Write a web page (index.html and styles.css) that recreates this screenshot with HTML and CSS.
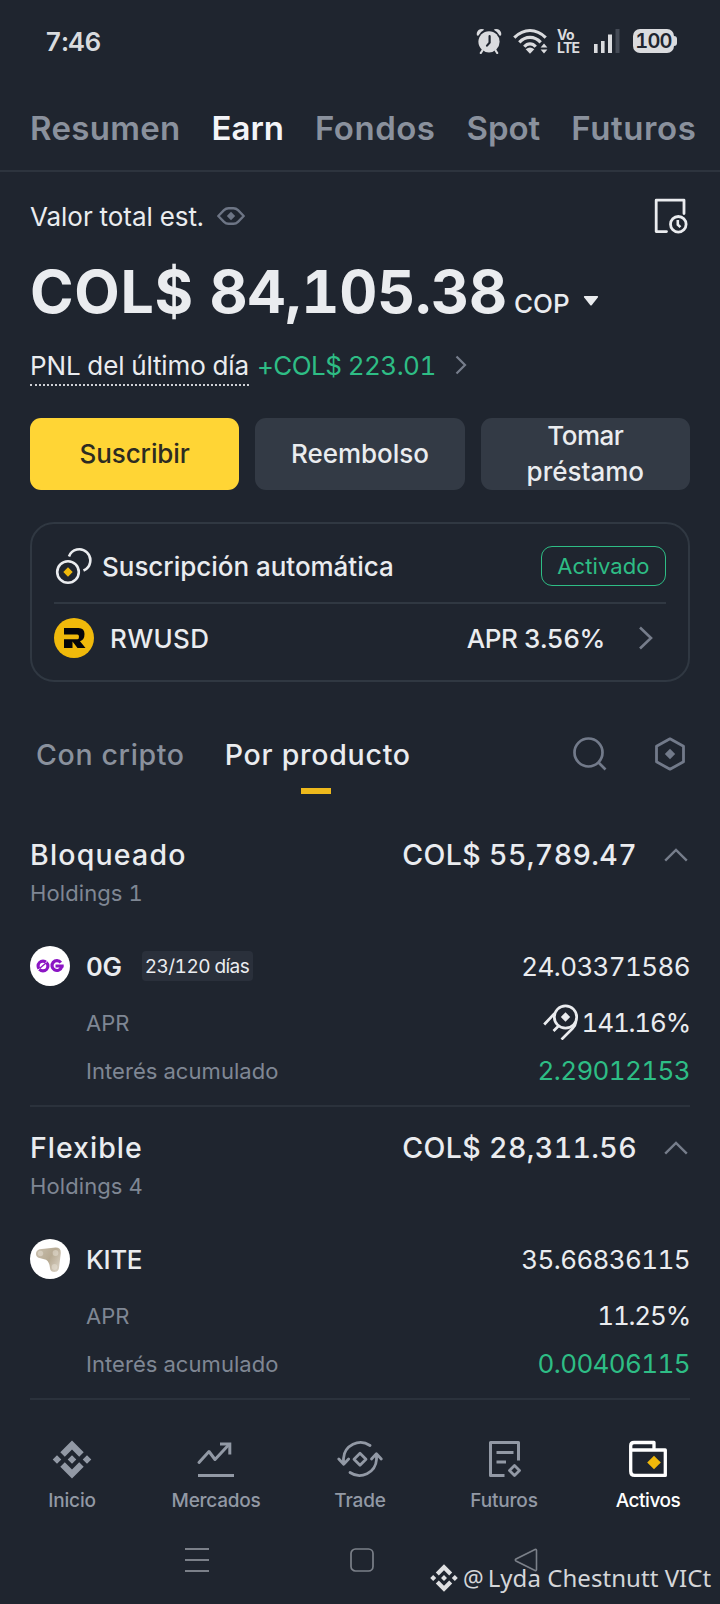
FILE: index.html
```html
<!DOCTYPE html>
<html lang="es">
<head>
<meta charset="utf-8">
<title>Earn</title>
<link rel="stylesheet" href="styles.css">
</head>
<body>
<div class="screen">
  <header class="status">
    <span class="time">7:46</span>
    <div class="status-icons">
      <svg class="alarm" width="26" height="26" viewBox="0 0 26 26"><g fill="#dadbde"><circle cx="13" cy="13.8" r="10.6"/><path d="M1 7.6Q-.2 3.2 4 1.2Q7 .4 8.2 1.8Q4 4 2.3 7.8z"/><path d="M25 7.6Q26.2 3.2 22 1.2Q19 .4 17.8 1.8Q22 4 23.7 7.8z"/></g><path d="M6.4 22.5L4.8 25M19.6 22.5L21.2 25" stroke="#dadbde" stroke-width="2.2" stroke-linecap="round"/><path d="M13.6 8.2v6.4L11 17.6" fill="none" stroke="#1f252f" stroke-width="2.2" stroke-linecap="round"/></svg>
      <svg class="wifi" width="36" height="26" viewBox="0 0 36 26"><g fill="none" stroke="#dadbde" stroke-width="3.2"><path d="M1.3 9.6Q8.5 2.5 17 2.5T32.7 9.6"/><path d="M6.3 14.3Q11 9.3 17 9.3T27.7 14.3"/><path d="M11.3 18.7Q13.8 15.8 17 15.8T22.7 18.7"/></g><path d="M12.7 21.3Q17 17.8 21.3 21.3L17 25.8z" fill="#dadbde"/><path d="M31 15.5l3.4 4.1h-6.8zM31 25.5l3.4-4.1h-6.8z" fill="#dadbde"/></svg>
      <span class="volte"><span>Vo</span><span>LTE</span></span>
      <svg class="signal" width="26" height="26" viewBox="0 0 26 26"><path d="M0 16h3.6v9H0zM7 13h3.6v12H7zM14 6.500h4V25h-4z" fill="#dadbde"/><path d="M21.500 1h4v24h-4z" fill="#444a55"/></svg>
      <span class="battery"><span class="battery-body">100</span><i></i></span>
    </div>
  </header>

  <nav class="tabs">
    <span class="t-resumen">Resumen</span><span class="t-earn on">Earn</span><span class="t-fondos">Fondos</span><span class="t-spot">Spot</span><span class="t-futuros">Futuros</span>
  </nav>

  <main>
    <div class="value-row">
      <span class="value-label">Valor total est.</span>
      <svg class="eye" width="28" height="18" viewBox="0 0 28 18" fill="none"><path d="M1.300 9L7 3.200Q9 1.200 11.500 1.200h5Q19 1.200 21 3.200L26.700 9L21 14.800Q19 16.800 16.500 16.800h-5Q9 16.800 7 14.800z" stroke="#6d7585" stroke-width="2.400" stroke-linejoin="round"/><path d="M14 4.800l4.200 4.200-4.200 4.200-4.200-4.200z" fill="#6d7585"/></svg>
      <svg class="history" width="34" height="36" viewBox="0 0 34 36" fill="none" stroke="#eaecef" stroke-width="2.800"><path d="M12.500 33.600H2.200V2.200H30v13.300" stroke-linecap="round" stroke-linejoin="round"/><circle cx="24.300" cy="26.300" r="7.800"/><path d="M23.800 22v4.600l2.600 2.600" stroke-width="2.600"/></svg>
    </div>
    <div class="balance">
      <span class="amount"><span class="cur">COL$</span> 84,105.38</span><span class="currency">COP</span>
      <svg width="16" height="10" viewBox="0 0 16 10"><path d="M1.500 0h13Q15.600.4 14.800 1.500L8.900 9Q8 10 7.100 9L1.200 1.500Q.4.4 1.500 0z" fill="#eaecef"/></svg>
    </div>
    <div class="pnl">
      <span class="pnl-label">PNL del último día</span><span class="pnl-value">+COL$ 223.01</span>
      <svg width="12" height="20" viewBox="0 0 12 20"><path d="M1.500 1.500L10 10 1.500 18.500" fill="none" stroke="#767d8b" stroke-width="2.200"/></svg>
    </div>

    <div class="actions">
      <button class="primary">Suscribir</button>
      <button class="b-reembolso">Reembolso</button>
      <button class="b-prestamo"><span class="l1">Tomar</span><span>préstamo</span></button>
    </div>

    <section class="card">
      <div class="card-top">
        <svg width="38" height="38" viewBox="0 0 38 38" fill="none"><circle cx="13" cy="25" r="10.800" stroke="#eaecef" stroke-width="2.600"/><path d="M14 9.500A11 11 0 1 1 28.500 23.500" stroke="#eaecef" stroke-width="2.600"/><path d="M13 20.300l4.700 4.700-4.700 4.700L8.300 25z" fill="#f0b90b"/></svg>
        <span class="card-title">Suscripción automática</span>
        <span class="badge">Activado</span>
      </div>
      <div class="card-bottom">
        <svg class="rw" width="40" height="40" viewBox="0 0 40 40"><circle cx="20" cy="20" r="20" fill="#f0b90b"/><path d="M10 10h14.500Q30.500 10 30.500 16t-4.500 7.200L31.500 30H23.500L18.500 23.500V30H10V21.300H23.500Q25 21.300 25 18.800T23 16.500H10z" fill="#05060a"/></svg>
        <span class="rw-name">RWUSD</span>
        <span class="rw-apr">APR 3.56%</span>
        <svg class="chev" width="16" height="24" viewBox="0 0 16 24"><path d="M2 1.500L13 12 2 22.500" fill="none" stroke="#767d8b" stroke-width="2.600"/></svg>
      </div>
    </section>

    <div class="subtabs">
      <span class="st-cripto">Con cripto</span>
      <span class="st-producto">Por producto</span>
      <svg class="search" width="36" height="36" viewBox="0 0 36 36" fill="none" stroke="#727a8a" stroke-width="2.700"><circle cx="16.500" cy="16.500" r="14"/><path d="M26.500 26.500l7 7"/></svg>
      <svg class="hex" width="32" height="34" viewBox="0 0 32 34"><path d="M16 1.800L29.500 9.200V24.800L16 32.200 2.500 24.800V9.200z" fill="none" stroke="#727a8a" stroke-width="2.800" stroke-linejoin="round"/><path d="M16 11.800l5.200 5.200-5.200 5.200-5.200-5.200z" fill="#727a8a"/></svg>
    </div>

    <section class="group">
      <div class="group-head">
        <h2 class="h-bloq">Bloqueado</h2><span class="total">COL$ 55,789.47</span>
        <svg width="24" height="14" viewBox="0 0 24 14"><path d="M1.200 12.700L12 2 22.800 12.700" fill="none" stroke="#767d8b" stroke-width="2.400"/></svg>
      </div>
      <p class="holdings">Holdings 1</p>
      <div class="asset">
        <svg class="coin" width="40" height="40" viewBox="0 0 40 40"><circle cx="20" cy="20" r="20" fill="#fff"/><g fill="none" stroke="#8b15c4" stroke-width="3.200"><circle cx="13" cy="20" r="4.900"/><path d="M30.800 16.600A4.900 4.900 0 1 0 31.600 21M25.500 20h8.200"/></g><path d="M7.500 24.500L17.500 15" stroke="#fff" stroke-width="1"/><path d="M9.500 22.500L16 17" stroke="#8b15c4" stroke-width="1.400"/></svg>
        <span class="name n-0g">0G</span><span class="days">23/120 días</span>
        <span class="num n10">24.03371586</span>
      </div>
      <div class="line apr"><span class="lab">APR</span>
        <svg width="36" height="36" viewBox="0 0 36 36" fill="none" stroke="#eaecef" stroke-width="2.700"><circle cx="22.500" cy="13" r="11.200"/><path d="M1.200 20.500L11.500 9.500M10.500 27L16 21.500M33 17.500Q32.500 21.500 29.500 24.500L18.500 35.500"/><path d="M22.500 8.300l4.700 4.700-4.700 4.700-4.700-4.700z" fill="#eaecef" stroke="none"/></svg>
        <span class="num pct">141.16%</span></div>
      <div class="line interest"><span class="lab">Interés acumulado</span><span class="num n9 green">2.29012153</span></div>
    </section>

    <section class="group">
      <div class="group-head">
        <h2 class="h-flex">Flexible</h2><span class="total">COL$ 28,311.56</span>
        <svg width="24" height="14" viewBox="0 0 24 14"><path d="M1.200 12.700L12 2 22.800 12.700" fill="none" stroke="#767d8b" stroke-width="2.400"/></svg>
      </div>
      <p class="holdings">Holdings 4</p>
      <div class="asset">
        <svg class="coin" width="40" height="40" viewBox="0 0 40 40"><defs><linearGradient id="kite" x1="0" y1="0" x2="1" y2=".6"><stop offset="0" stop-color="#c9bfae"/><stop offset=".6" stop-color="#b7aa93"/><stop offset="1" stop-color="#d3cabb"/></linearGradient></defs><circle cx="20" cy="20" r="20" fill="#fff"/><path d="M9.500 10.300L25.500 8.600Q31 8.500 30.800 14L29 29Q28.300 33 24.300 33T20 29Q19.500 23 16 20.800L8.500 18.800Q5.800 17.500 6 14.500T9.500 10.300z" fill="url(#kite)"/><g fill="#e9e3d8" opacity=".5"><circle cx="10.500" cy="14.500" r="2.700"/><circle cx="25.500" cy="14" r="2.900"/><circle cx="24.500" cy="28" r="2.900"/></g></svg>
        <span class="name n-kite">KITE</span>
        <span class="num n10">35.66836115</span>
      </div>
      <div class="line apr"><span class="lab">APR</span><span class="num pct">11.25%</span></div>
      <div class="line interest"><span class="lab">Interés acumulado</span><span class="num n9 green">0.00406115</span></div>
    </section>
  </main>

  <nav class="bottom">
    <div class="item">
      <svg width="44" height="40" viewBox="0 0 44 40" fill="#9299a5"><path d="M22 .5l11.700 11.700-4.500 4.500L22 9.500l-7.200 7.200-4.500-4.500zM22 38.500L10.300 26.800l4.500-4.500L22 29.500l7.200-7.200 4.500 4.500zM22 15.200l4.300 4.300-4.300 4.300-4.300-4.300zM7 15.200l4.300 4.300L7 23.800 2.700 19.500zM37 15.200l4.300 4.300-4.300 4.300-4.300-4.300z"/></svg>
      <span class="l-inicio">Inicio</span>
    </div>
    <div class="item">
      <svg width="44" height="40" viewBox="0 0 44 40" fill="none" stroke="#9299a5" stroke-width="3"><path d="M5 22.500L15 11.500l6 8L35 4.500" stroke-linejoin="round" stroke-linecap="round"/><path d="M26 4h9.800v10.400"/><path d="M4 35.500h36"/></svg>
      <span class="l-mercados">Mercados</span>
    </div>
    <div class="item">
      <svg width="48" height="40" viewBox="0 0 48 40" fill="none" stroke="#9299a5" stroke-width="2.800" stroke-linecap="round" stroke-linejoin="round"><path d="M34 5.500A17 17 0 0 0 7.500 18.500v5.500M2.800 19l4.900 5.200 4.900-5.200"/><path d="M14 32.500A17 17 0 0 0 40.500 19.500v-5.500M35.500 19l4.900-5.200 4.900 5.200"/><path d="M24 13.200l6 6-6 6-6-6z"/></svg>
      <span class="l-trade">Trade</span>
    </div>
    <div class="item">
      <svg width="44" height="40" viewBox="0 0 44 40" fill="none" stroke="#9299a5" stroke-width="3"><path d="M22.500 35.500H8.500V2.500h28v18" stroke-linejoin="round"/><path d="M14.500 12.500h17M14.500 22h9.500"/><path d="M32.500 25.500l5 5-5 5-5-5z" stroke-width="2.800" stroke-linejoin="round"/></svg>
      <span class="l-futuros">Futuros</span>
    </div>
    <div class="item on">
      <svg width="44" height="40" viewBox="0 0 44 40" fill="none" stroke="#fff" stroke-width="3.300" stroke-linejoin="round"><path d="M28 9.500V2.500H8Q4.700 2.500 4.700 5.700V31.200Q4.700 35.400 8.700 35.400H39.300V10H5"/><path d="M28 15.700l6.800 6.800-6.800 6.800-6.800-6.800z" fill="#f0b90b" stroke="none"/></svg>
      <span class="l-activos">Activos</span>
    </div>
  </nav>

  <footer class="sys">
    <svg width="24" height="24" viewBox="0 0 24 24" stroke="#7b8089" stroke-width="1.800"><path d="M0 1h24M0 12h24M0 23h24"/></svg>
    <svg width="24" height="24" viewBox="0 0 24 24"><rect x="1" y="1" width="22" height="22" rx="4.500" fill="none" stroke="#7b8089" stroke-width="1.700"/></svg>
    <svg width="24" height="24" viewBox="0 0 24 24"><path d="M22.500 2.300v19.400Q22.300 23 21 22.500L2 13Q.6 12 2 11L21 1.500Q22.300 1 22.500 2.300z" fill="none" stroke="#7b8089" stroke-width="1.600"/></svg>
  </footer>
  <div class="watermark">
    <svg width="28" height="28" viewBox="0 0 28 28" fill="#dfe0e2"><path d="M14 .2l8.200 8.200-3 3L14 6.200l-5.200 5.200-3-3zM14 27.800L5.800 19.600l3-3L14 21.800l5.200-5.200 3 3zM14 11l3 3-3 3-3-3zM3.200 11l3 3-3 3-3-3zM24.800 11l3 3-3 3-3-3z"/></svg>
    <span class="at">@</span><span class="user">Lyda Chestnutt VICt</span>
  </div>
</div>
</body>
</html>
```
FILE: styles.css
```css
* { box-sizing: border-box; margin: 0; padding: 0; }
body { background: #1f252f; }
.screen {
  position: relative;
  width: 720px;
  height: 1604px;
  overflow: hidden;
  background: #1f252f;
  color: #eaecef;
  font-family: Inter, "Liberation Sans", sans-serif;
  font-size: 26px;
  font-variant-numeric: tabular-nums;
  white-space: nowrap;
}
svg { display: block; flex: none; }

.status { display: flex; justify-content: space-between; height: 82px; padding: 0 43px 0 45px; align-items: center; }
.time { font-size: 26px; font-weight: 600; color: #d9dbde; letter-spacing: -.4px; }
.status-icons { display: flex; align-items: center; }
.wifi { margin-left: 11px; }
.volte { display: flex; flex-direction: column; width: 24px; margin-left: 8px; font-size: 14px; line-height: 13px; font-weight: 700; color: #dadbde; letter-spacing: -.7px; }
.signal { margin-left: 13px; }
.battery { display: flex; align-items: center; margin-left: 13px; }
.battery-body { width: 41px; height: 24px; border-radius: 7px; background: #dadbde; color: #1f252f; font-size: 20px; line-height: 24px; font-weight: 600; text-align: center; letter-spacing: -.8px; }
.battery i { width: 3px; height: 10px; border-radius: 0 3px 3px 0; background: #dadbde; }

.tabs { display: flex; gap: 31px; height: 90px; padding-left: 30px; border-bottom: 2px solid #2d343e; font-size: 33px; line-height: 92px; font-weight: 600; color: #8a919d; }
.tabs .on { color: #f3f4f8; }
.t-resumen { letter-spacing: .3px; }
.t-fondos { letter-spacing: .5px; }
.t-futuros { letter-spacing: .6px; }

main { padding: 0 30px; }
.value-row { display: flex; align-items: center; height: 36px; margin-top: 26px; }
.value-label { letter-spacing: -.05px; }
.eye { margin-left: 13px; }
.history { margin-left: auto; margin-right: 2px; }
.balance { display: flex; align-items: baseline; height: 75px; margin-top: 20px; line-height: 75px; }
.amount { font-size: 59px; font-weight: 700; letter-spacing: -.15px; }
.cur { letter-spacing: .7px; }
.currency { font-weight: 500; margin-left: 7px; }
.balance svg { margin-left: 13px; transform: translateY(-7px); }
.pnl { display: flex; height: 40px; margin-top: 17px; line-height: 39px; }
.pnl-label { height: 40px; border-bottom: 2px dotted #cfd1d6; letter-spacing: -.13px; }
.pnl-value { margin-left: 8px; color: #2ebd85; letter-spacing: -.55px; }
.pnl svg { margin: 9px 0 0 19px; }

.actions { display: grid; grid-template-columns: repeat(3, 1fr); gap: 16px; margin-top: 32px; }
.actions button { display: flex; flex-direction: column; align-items: center; justify-content: center; height: 72px; border: 0; border-radius: 11px; background: #333a45; color: #eaecef; font: 500 26px/36px Inter, "Liberation Sans", sans-serif; }
.actions .primary { background: #ffd535; color: #2d2b22; letter-spacing: -.1px; }
.l1 { letter-spacing: -.5px; }

.card { height: 160px; margin-top: 32px; padding: 0 22px; border: 2px solid #303842; border-radius: 24px; }
.card-top { display: flex; align-items: center; height: 80px; padding-top: 6px; border-bottom: 2px solid #303842; font-weight: 500; }
.card-top svg { margin-left: 1px; }
.card-title { margin-left: 9px; letter-spacing: -.03px; }
.badge { margin-left: auto; width: 125px; height: 40px; border: 1.500px solid #2ebd85; border-radius: 11px; font-size: 22px; line-height: 38px; font-weight: 400; text-align: center; color: #2ebd85; letter-spacing: .1px; }
.card-bottom { display: flex; align-items: center; height: 68px; font-weight: 500; }
.rw-name { margin-left: 16px; letter-spacing: .3px; }
.rw-apr { margin-left: auto; letter-spacing: -.45px; }
.chev { margin: 0 12px 0 33px; }

.subtabs { position: relative; display: flex; height: 70px; margin-top: 42px; font-size: 28.500px; line-height: 61px; font-weight: 500; }
.st-cripto { margin-left: 6px; color: #8a919d; letter-spacing: .65px; }
.st-producto { position: relative; margin-left: 40px; letter-spacing: .75px; }
.st-producto::after { content: ""; position: absolute; left: 76px; bottom: 0; width: 30px; height: 6px; background: #eeb91c; }
.search { margin: 12px 46px 0 auto; }
.hex { margin: 13px 4px 0 0; }

.group { height: 293px; padding-top: 22px; border-bottom: 2px solid #2b323c; }
.subtabs + .group { margin-top: 20px; }
.group-head { display: flex; align-items: center; height: 37px; font-weight: 500; font-size: 28.500px; }
h2 { font: inherit; }
.h-bloq { letter-spacing: 1.200px; }
.h-flex { letter-spacing: 1px; }
.total { margin-left: auto; letter-spacing: .37px; }
.group-head svg { margin: 0 2px 0 27px; }
.holdings { margin-top: 7px; font-size: 22px; line-height: 26px; color: #7f8794; letter-spacing: .1px; }
.asset { display: flex; align-items: center; height: 40px; margin-top: 40px; }
.name { margin-left: 16px; font-weight: 500; letter-spacing: -.4px; }
.n-0g { font-weight: 600; }
.days { margin-left: 20px; width: 111px; height: 30px; border-radius: 4px; background: #2a303b; font-size: 19px; line-height: 31px; text-align: center; letter-spacing: -.55px; }
.num { margin-left: auto; letter-spacing: -.63px; }
.pct { letter-spacing: -1.200px; }
.line { display: flex; align-items: center; height: 36px; padding-left: 56px; }
.lab { font-size: 22px; color: #7f8794; padding-top: 1px; letter-spacing: .06px; }
.apr { margin-top: 18px; }
.apr svg { margin-left: auto; }
.apr svg + .num { margin-left: 3px; }
.interest { margin-top: 12px; }
.green { color: #2ebd85; }

.bottom { display: flex; margin-top: 40px; height: 80px; }
.item { display: flex; flex-direction: column; align-items: center; width: 144px; color: #9299a5; font-size: 19px; line-height: 24px; font-weight: 500; letter-spacing: -.15px; }
.item svg { margin-bottom: 9px; }
.item.on { color: #fff; letter-spacing: -.45px; }
.l-mercados { letter-spacing: -.25px; }
.sys { display: flex; justify-content: space-between; margin-top: 28px; padding: 0 182px 0 185px; }
.watermark { position: absolute; left: 430px; top: 1560px; display: flex; align-items: center; height: 36px; font: 24px/36px "Noto Sans", sans-serif; color: #d4d6d9; }
.watermark .at { margin-left: 5px; font-size: 23px; }
.watermark .user { margin-left: 4px; letter-spacing: .05px; }
```
